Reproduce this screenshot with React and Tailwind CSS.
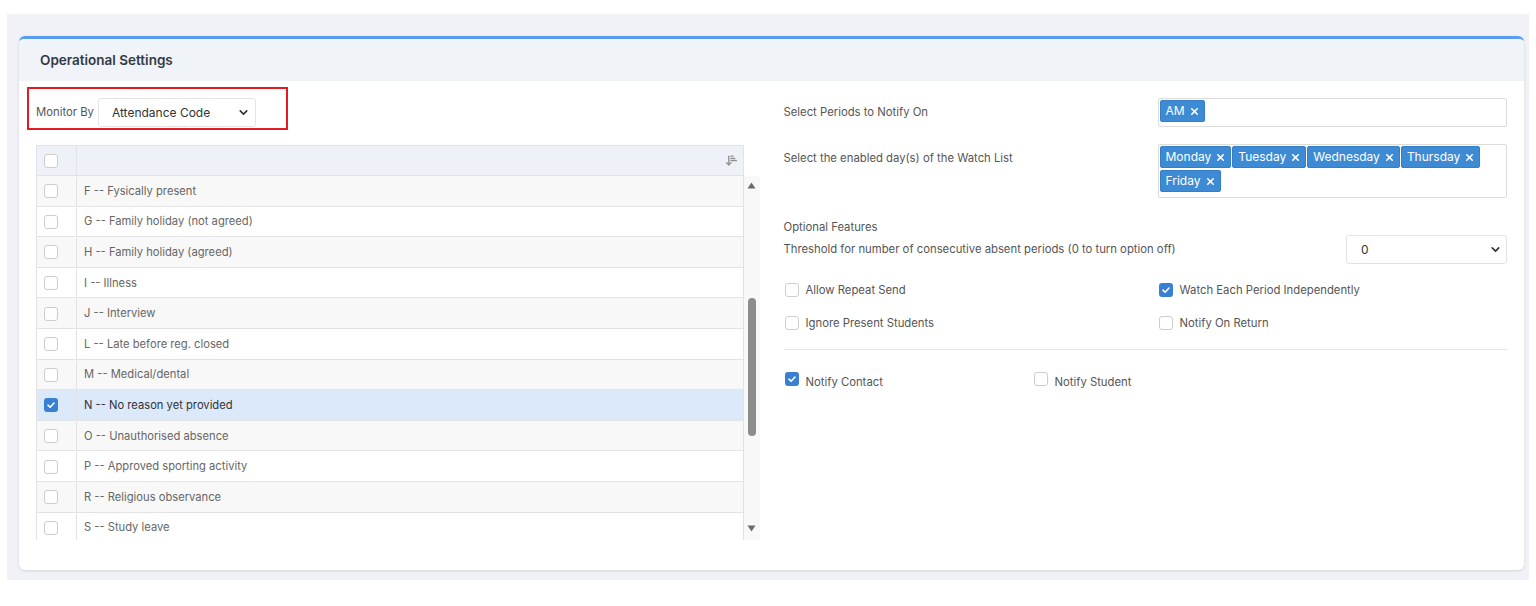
import { ArrowDownNarrowWide, ChevronDown, X } from "lucide-react";

const codes = [
  { label: "F -- Fysically present" },
  { label: "G -- Family holiday (not agreed)" },
  { label: "H -- Family holiday (agreed)" },
  { label: "I -- Illness" },
  { label: "J -- Interview" },
  { label: "L -- Late before reg. closed" },
  { label: "M -- Medical/dental" },
  { label: "N -- No reason yet provided", checked: true },
  { label: "O -- Unauthorised absence" },
  { label: "P -- Approved sporting activity" },
  { label: "R -- Religious observance" },
  { label: "S -- Study leave" },
];

const days = ["Monday", "Tuesday", "Wednesday", "Thursday", "Friday"];

function Check({ checked }) {
  if (checked) {
    return (
      <span className="flex h-[14px] w-[14px] shrink-0 items-center justify-center rounded-[3px] bg-[#3a80d2]">
        <svg width="10" height="10" viewBox="0 0 10 10" fill="none">
          <path d="M2 5.2L4.1 7.2L8 3" stroke="white" strokeWidth="1.6" strokeLinecap="round" strokeLinejoin="round" />
        </svg>
      </span>
    );
  }
  return <span className="h-[14px] w-[14px] shrink-0 rounded-[3px] border border-[#cdcdcd] bg-white" />;
}

function Tag({ children }) {
  return (
    <span className="flex h-[22px] items-center gap-[4px] rounded-[2px] border border-[#367fc4] bg-[#3d8bd5] pl-[5px] pr-[4px] text-[12px] text-white">
      {children}
      <X size={11} strokeWidth={3.5} />
    </span>
  );
}

function CheckLabel({ checked, children }) {
  return (
    <label className="flex h-[16px] items-center gap-[7px] text-[11.3px] leading-[16px] text-[#555]">
      <Check checked={checked} />
      {children}
    </label>
  );
}

function NotifyLabel({ checked, children }) {
  return (
    <label className="flex items-start gap-[7px] text-[11.3px] leading-[16px] text-[#555]">
      <Check checked={checked} />
      <span className="pt-[2px]">{children}</span>
    </label>
  );
}

function CodeTable() {
  return (
    <div className="mt-[15px] w-full">
      <div className="mr-[16px] flex h-[31px] border border-[#dfe3ea] bg-[#eef2f8]">
        <div className="flex w-[40px] items-center border-r border-[#dfe3ea] pl-[7px]">
          <Check />
        </div>
        <div className="flex flex-1 items-center justify-end pr-[5px] text-[#8f8f8f]">
          <ArrowDownNarrowWide size={13} strokeWidth={2.5} />
        </div>
      </div>
      <div className="flex h-[364px] overflow-hidden">
        <div className="flex-1 border-l border-r border-[#e2e2e2]">
          {codes.map((row, i) => (
            <div
              key={row.label}
              className={
                "flex h-[30.6px] border-b border-[#e4e4e4] pt-[1px] " +
                (row.checked ? "bg-[#dce9fb] text-[#333]" : i % 2 === 0 ? "bg-[#f8f8f8] text-[#666]" : "bg-white text-[#666]")
              }
            >
              <div className="flex w-[40px] items-center border-r border-[#e2e2e2] pl-[7px]">
                <Check checked={row.checked} />
              </div>
              <div className="flex flex-1 items-center pl-[7px] text-[11.2px]">{row.label}</div>
            </div>
          ))}
        </div>
        <div className="flex w-[16px] flex-col items-center bg-[#f8f8f8]">
          <svg className="mt-[6px]" width="9" height="7" viewBox="0 0 9 7">
            <path d="M4.5 0.5L8.5 6.5H0.5Z" fill="#6b6b6b" />
          </svg>
          <div className="mt-[109px] h-[138px] w-[8px] rounded-[4px] bg-[#8c8c8c]" />
          <svg className="mt-auto mb-[8px]" width="9" height="7" viewBox="0 0 9 7">
            <path d="M4.5 6.5L8.5 0.5H0.5Z" fill="#6b6b6b" />
          </svg>
        </div>
      </div>
    </div>
  );
}

function LeftColumn() {
  return (
    <div>
      <div className="-mt-[11px] -ml-[9px] inline-flex items-center gap-[4px] border-2 border-[#e31b23] pt-[9px] pb-[1px] pl-[7px] pr-[30px]">
        <span className="text-[11.3px] text-[#555]">Monitor By</span>
        <div className="flex h-[29px] w-[158px] items-center justify-between rounded-[3px] border border-[#e4e4e4] pl-[13px] pr-[5px] text-[12px] text-[#333]">
          Attendance Code
          <ChevronDown size={13} strokeWidth={3} className="text-[#333]" />
        </div>
      </div>
      <CodeTable />
    </div>
  );
}

function RightColumn() {
  return (
    <div className="text-[11.3px] text-[#555]">
      <div className="grid grid-cols-[374px_1fr] items-center">
        <span>Select Periods to Notify On</span>
        <div className="flex h-[29px] rounded-[2px] border border-[#dcdcdc] p-[1px]">
          <Tag>AM</Tag>
        </div>
      </div>
      <div className="mt-[17px] grid grid-cols-[374px_1fr] items-start">
        <span className="pt-[6px]">Select the enabled day(s) of the Watch List</span>
        <div className="flex h-[54px] flex-wrap content-start gap-x-[1px] gap-y-[2px] rounded-[2px] border border-[#dcdcdc] p-[1px]">
          {days.map((d) => (
            <Tag key={d}>{d}</Tag>
          ))}
        </div>
      </div>
      <div className="mt-[21px] leading-[16px]">Optional Features</div>
      <div className="flex items-center justify-between">
        <span>Threshold for number of consecutive absent periods (0 to turn option off)</span>
        <div className="flex h-[29px] w-[161px] items-center justify-between rounded-[3px] border border-[#e4e4e4] pl-[14px] pr-[4px] text-[12px] text-[#333]">
          0
          <ChevronDown size={13} strokeWidth={3} className="text-[#333]" />
        </div>
      </div>
      <div className="mt-[18px] grid grid-cols-[374px_1fr] gap-y-[17px] pl-[1px]">
        <CheckLabel>Allow Repeat Send</CheckLabel>
        <CheckLabel checked>Watch Each Period Independently</CheckLabel>
        <CheckLabel>Ignore Present Students</CheckLabel>
        <CheckLabel>Notify On Return</CheckLabel>
      </div>
      <div className="mt-[18px] border-t border-[#e6e6e6]" />
      <div className="mt-[22px] flex pl-[1px]">
        <div className="w-[249px]">
          <NotifyLabel checked>Notify Contact</NotifyLabel>
        </div>
        <NotifyLabel>Notify Student</NotifyLabel>
      </div>
    </div>
  );
}

export default function App() {
  return (
    <div className="min-h-[606px] bg-white pt-[14px] pl-[7px] pr-[7px] font-['Inter',sans-serif]">
      <div className="h-[566px] bg-[#f0f2f7] pl-[12px] pr-[5px] pt-[22px]">
        <div className="h-[534px] overflow-hidden rounded-[6px] border-t-[3px] border-[#5a9cf0] bg-white shadow-[0_1px_3px_rgba(0,0,0,0.12)]">
          <div className="flex h-[42px] items-center bg-[#f0f3f8] pl-[21px] text-[13.5px] font-semibold text-[#333a45]">
            Operational Settings
          </div>
          <div className="grid grid-cols-2 gap-[24px] px-[17px] pt-[17px]">
            <LeftColumn />
            <RightColumn />
          </div>
        </div>
      </div>
    </div>
  );
}
